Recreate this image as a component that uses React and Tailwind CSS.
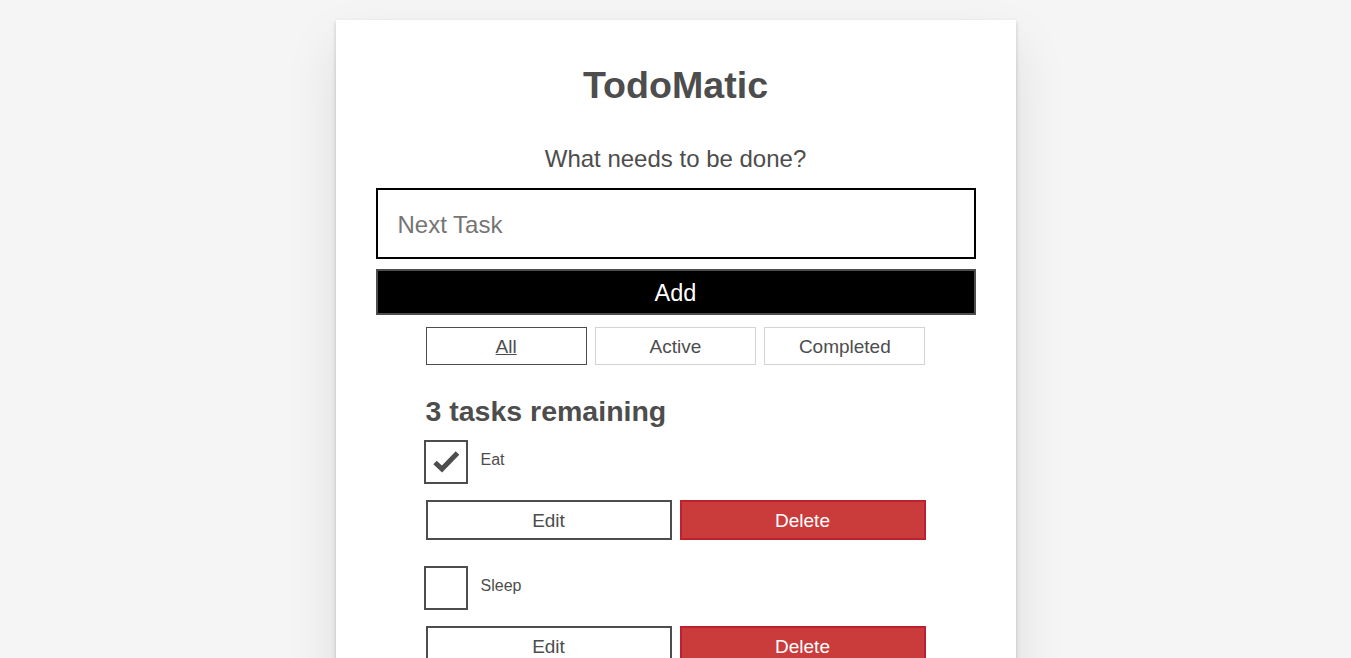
import React from "react";

function Todo({ name, checked }) {
  return (
    <li className="flex flex-col">
      <div className="flex items-center">
        <div className="w-[44px] h-[44px] ml-[-2px] border-2 border-[#4d4d4d] bg-white">
          {checked && (
            <svg width="40" height="40" viewBox="0 0 40 40" className="block">
              <polyline points="9,20.5 16,27 31.5,11" fill="none" stroke="#4d4d4d" strokeWidth="5" strokeLinecap="butt" strokeLinejoin="miter" />
            </svg>
          )}
        </div>
        <label className="ml-[13px] text-[16px] leading-[20px] text-[#4d4d4d] mt-[-4px]">{name}</label>
      </div>
      <div className="flex gap-[8px] mt-[16px]">
        <button className="flex-1 h-[40px] border-2 border-[#4d4d4d] bg-white text-[19px] leading-[20px] pt-[1px] text-[#4d4d4d]">Edit</button>
        <button className="flex-1 h-[40px] border-2 border-[#bd2130] bg-[#ca3c3c] text-[19px] leading-[20px] pt-[1px] text-white">Delete</button>
      </div>
    </li>
  );
}

export default function App() {
  return (
    <div className="min-h-screen bg-[#f5f5f5] pt-[20px] pb-[40px] text-[#4d4d4d]" style={{ fontFamily: '"Liberation Sans", Arial, sans-serif' }}>
      <div className="w-[680px] mx-auto bg-white p-[40px] shadow-[0_2px_4px_0_rgba(0,0,0,0.2),0_25px_50px_0_rgba(0,0,0,0.1)]">
        <h1 className="mt-[3px] text-[37.6px] font-bold text-center leading-[45px]">TodoMatic</h1>
        <div className="mt-[30px] py-[8px] text-center text-[24px] leading-[26px]">What needs to be done?</div>
        <input
          className="mt-[8px] block w-full h-[71px] border-2 border-black px-[20px] pt-[3px] text-[24px] placeholder:text-[#757575] outline-none"
          placeholder="Next Task"
        />
        <button className="mt-[10px] block w-full h-[46px] bg-black border-2 border-[#4d4d4d] text-white text-[23.5px] leading-[24px] pt-[2px]">Add</button>
        <div className="w-[500px] mx-auto">
          <div className="flex gap-[8px] mt-[12px]">
            <button className="flex-1 h-[38px] border border-[#4d4d4d] bg-white text-[19px] leading-[20px] pt-[2px] underline">All</button>
            <button className="flex-1 h-[38px] border border-[#d3d3d3] bg-white text-[19px] leading-[20px] pt-[2px]">Active</button>
            <button className="flex-1 h-[38px] border border-[#d3d3d3] bg-white text-[19px] leading-[20px] pt-[2px]">Completed</button>
          </div>
          <h2 className="mt-[28px] text-[28.5px] font-bold leading-[36px]">3 tasks remaining</h2>
          <ul className="mt-[11px] flex flex-col gap-[26px]">
            <Todo name="Eat" checked />
            <Todo name="Sleep" />
            <Todo name="Repeat" />
          </ul>
        </div>
      </div>
    </div>
  );
}
